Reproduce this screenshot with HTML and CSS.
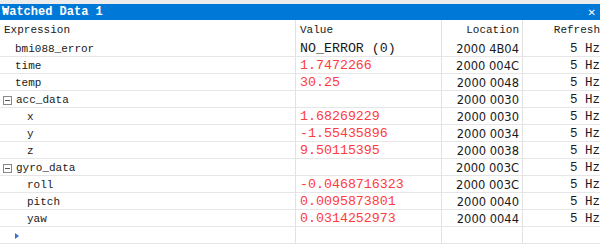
FILE: index.html
```html
<!DOCTYPE html>
<html>
<head>
  <meta charset="UTF-8" />
  <title>Watched Data 1</title>
  <link rel="stylesheet" href="styles.css">
</head>
<body>
  <div class="strip"></div>
  <div class="titlebar">
    <span class="title"><span class="pin"></span>Watched Data 1</span>
    <span class="close">&#x2715;</span>
  </div>
  <div class="grid">
    <div class="cell head">Expression</div>
    <div class="cell head">Value</div>
    <div class="cell head right">Location</div>
    <div class="cell head right last">Refresh</div>

    <div class="cell name l1">bmi088_error</div>
    <div class="cell val black">NO_ERROR (0)</div>
    <div class="cell loc">2000 4B04</div>
    <div class="cell hz">5 Hz</div>

    <div class="cell name l1">time</div>
    <div class="cell val">1.7472266</div>
    <div class="cell loc">2000 004C</div>
    <div class="cell hz">5 Hz</div>

    <div class="cell name l1">temp</div>
    <div class="cell val">30.25</div>
    <div class="cell loc">2000 0048</div>
    <div class="cell hz">5 Hz</div>

    <div class="cell name"><span class="toggle"></span>acc_data</div>
    <div class="cell val"></div>
    <div class="cell loc">2000 0030</div>
    <div class="cell hz">5 Hz</div>

    <div class="cell name l2">x</div>
    <div class="cell val">1.68269229</div>
    <div class="cell loc">2000 0030</div>
    <div class="cell hz">5 Hz</div>

    <div class="cell name l2">y</div>
    <div class="cell val">-1.55435896</div>
    <div class="cell loc">2000 0034</div>
    <div class="cell hz">5 Hz</div>

    <div class="cell name l2">z</div>
    <div class="cell val">9.50115395</div>
    <div class="cell loc">2000 0038</div>
    <div class="cell hz">5 Hz</div>

    <div class="cell name"><span class="toggle"></span>gyro_data</div>
    <div class="cell val"></div>
    <div class="cell loc">2000 003C</div>
    <div class="cell hz">5 Hz</div>

    <div class="cell name l2">roll</div>
    <div class="cell val">-0.0468716323</div>
    <div class="cell loc">2000 003C</div>
    <div class="cell hz">5 Hz</div>

    <div class="cell name l2">pitch</div>
    <div class="cell val">0.0095873801</div>
    <div class="cell loc">2000 0040</div>
    <div class="cell hz">5 Hz</div>

    <div class="cell name l2">yaw</div>
    <div class="cell val">0.0314252973</div>
    <div class="cell loc">2000 0044</div>
    <div class="cell hz">5 Hz</div>

    <div class="cell name l1"><span class="add"></span></div>
    <div class="cell val"></div>
    <div class="cell loc"></div>
    <div class="cell hz"></div>
  </div>
</body>
</html>
```
FILE: styles.css
```css
body {
  margin: 0;
  background: #fff;
  overflow: hidden;
  font-family: "Liberation Mono", monospace;
}
.strip {
  height: 4px;
  background: #ececec;
}
.titlebar {
  height: 16px;
  background: #0078d7;
  color: #fff;
  display: flex;
  align-items: center;
  justify-content: space-between;
}
.title {
  font-weight: bold;
  font-size: 12px;
  padding-left: 2px;
  position: relative;
}
.pin {
  position: absolute;
  left: 2px;
  top: 3px;
  width: 0;
  height: 0;
  border-left: 3px solid transparent;
  border-right: 3px solid transparent;
  border-top: 6px solid #fff;
}
.close {
  font-family: "DejaVu Sans", sans-serif;
  font-size: 10px;
  padding-right: 4px;
}
.grid {
  display: grid;
  grid-template-columns: 296px 146px 81px 77px;
  grid-template-rows: 20px;
  grid-auto-rows: 17px;
}
.cell {
  border-right: 1px solid #e2e2e2;
  border-bottom: 1px solid #e6e6e6;
  line-height: 18px;
  white-space: nowrap;
  overflow: hidden;
  color: #1a1a1a;
}
.head {
  font-size: 11px;
  line-height: 21px;
  border-bottom: none;
  padding-left: 4px;
}
.head.right {
  text-align: right;
  padding-right: 3px;
}
.head.last {
  padding-right: 0;
  border-right: none;
}
.name {
  font-size: 11px;
  padding-left: 3px;
  padding-top: 2px;
  display: flex;
  align-items: center;
}
.l1 {
  padding-left: 15px;
}
.l2 {
  padding-left: 27px;
}
.toggle {
  width: 7px;
  height: 7px;
  border: 1px solid #888;
  margin-right: 4px;
  position: relative;
}
.toggle::after {
  content: "";
  position: absolute;
  left: 1px;
  top: 3px;
  width: 5px;
  height: 1px;
  background: #555;
}
.add {
  width: 0;
  height: 0;
  border-top: 3px solid transparent;
  border-bottom: 3px solid transparent;
  border-left: 4px solid #3a6fd0;
}
.val {
  font-size: 13.3px;
  color: #ff3b3b;
  padding-left: 4px;
}
.val.black {
  color: #1a1a1a;
}
.loc {
  font-family: "DejaVu Sans", sans-serif;
  font-size: 11.5px;
  text-align: right;
  padding-right: 3px;
}
.hz {
  font-size: 12.5px;
  text-align: right;
  border-right: none;
}
```
